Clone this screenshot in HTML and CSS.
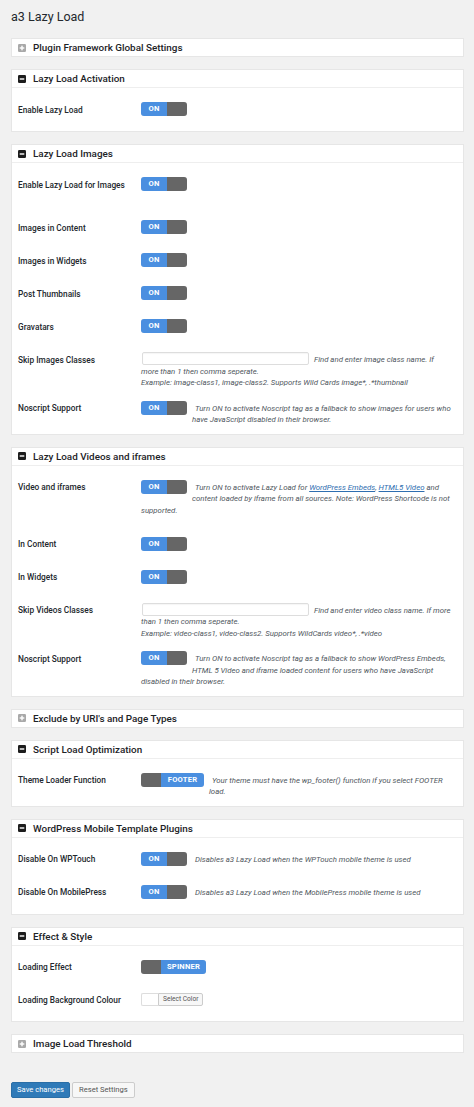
FILE: index.html
```html
<!DOCTYPE html>
<html>
<head>
<meta charset="utf-8">
<link rel="stylesheet" href="styles.css">
</head>
<body>
<div class="wrap">
  <h1 class="title">a3 Lazy Load</h1>

  <div class="box">
    <div class="hd closed"><svg class="ico" width="8" height="8" viewBox="0 0 8 8"><rect width="8" height="8" rx="1.2" fill="#a9a9a9"/><rect x="1.7" y="3.3" width="4.6" height="1.4" fill="#fff"/><rect x="3.3" y="1.7" width="1.4" height="4.6" fill="#fff"/></svg><span>Plugin Framework Global Settings</span></div>
  </div>

  <div class="box">
    <div class="hd"><svg class="ico" width="8" height="8" viewBox="0 0 8 8"><rect width="8" height="8" rx="1.2" fill="#1d1d1d"/><rect x="1.7" y="3.3" width="4.6" height="1.4" fill="#fff"/></svg><span>Lazy Load Activation</span></div>
    <div class="tbl">
      <div class="row"><div class="lbl">Enable Lazy Load</div><div class="fld"><span class="tg"><b class="tb">ON</b><i class="tr"></i></span></div></div>
    </div>
  </div>

  <div class="box">
    <div class="hd"><svg class="ico" width="8" height="8" viewBox="0 0 8 8"><rect width="8" height="8" rx="1.2" fill="#1d1d1d"/><rect x="1.7" y="3.3" width="4.6" height="1.4" fill="#fff"/></svg><span>Lazy Load Images</span></div>
    <div class="tbl">
      <div class="row row-tall"><div class="lbl">Enable Lazy Load for Images</div><div class="fld"><span class="tg"><b class="tb">ON</b><i class="tr"></i></span></div></div>
      <div class="row"><div class="lbl">Images in Content</div><div class="fld"><span class="tg"><b class="tb">ON</b><i class="tr"></i></span></div></div>
      <div class="row"><div class="lbl">Images in Widgets</div><div class="fld"><span class="tg"><b class="tb">ON</b><i class="tr"></i></span></div></div>
      <div class="row"><div class="lbl">Post Thumbnails</div><div class="fld"><span class="tg"><b class="tb">ON</b><i class="tr"></i></span></div></div>
      <div class="row"><div class="lbl">Gravatars</div><div class="fld"><span class="tg"><b class="tb">ON</b><i class="tr"></i></span></div></div>
      <div class="row row-skip"><div class="lbl">Skip Images Classes</div><div class="fld"><span class="inp"></span><p class="desc">Find and enter image class name. If<br>more than 1 then comma seperate.<br>Example: image-class1, image-class2. Supports Wild Cards image*, .*thumbnail</p></div></div>
      <div class="row row-desc"><div class="lbl">Noscript Support</div><div class="fld"><span class="tg fl"><b class="tb">ON</b><i class="tr"></i></span><p class="desc ind">Turn ON to activate Noscript tag as a fallback to show images for users who have JavaScript disabled in their browser.</p></div></div>
    </div>
  </div>

  <div class="box">
    <div class="hd"><svg class="ico" width="8" height="8" viewBox="0 0 8 8"><rect width="8" height="8" rx="1.2" fill="#1d1d1d"/><rect x="1.7" y="3.3" width="4.6" height="1.4" fill="#fff"/></svg><span>Lazy Load Videos and iframes</span></div>
    <div class="tbl">
      <div class="row row-video"><div class="lbl">Video and iframes</div><div class="fld"><span class="tg fl"><b class="tb">ON</b><i class="tr"></i></span><p class="desc ind">Turn ON to activate Lazy Load for <a href="#">WordPress Embeds</a>, <a href="#">HTML5 Video</a> and content loaded by iframe from all sources. Note: WordPress Shortcode is not supported.</p></div></div>
      <div class="row"><div class="lbl">In Content</div><div class="fld"><span class="tg"><b class="tb">ON</b><i class="tr"></i></span></div></div>
      <div class="row"><div class="lbl">In Widgets</div><div class="fld"><span class="tg"><b class="tb">ON</b><i class="tr"></i></span></div></div>
      <div class="row row-skip"><div class="lbl">Skip Videos Classes</div><div class="fld"><span class="inp"></span><p class="desc">Find and enter video class name. If more than 1 then comma seperate.<br>Example: video-class1, video-class2. Supports WildCards video*, .*video</p></div></div>
      <div class="row row-desc"><div class="lbl">Noscript Support</div><div class="fld"><span class="tg fl"><b class="tb">ON</b><i class="tr"></i></span><p class="desc ind">Turn ON to activate Noscript tag as a fallback to show WordPress Embeds, HTML 5 Video and iframe loaded content for users who have JavaScript disabled in their browser.</p></div></div>
    </div>
  </div>

  <div class="box">
    <div class="hd closed"><svg class="ico" width="8" height="8" viewBox="0 0 8 8"><rect width="8" height="8" rx="1.2" fill="#a9a9a9"/><rect x="1.7" y="3.3" width="4.6" height="1.4" fill="#fff"/><rect x="3.3" y="1.7" width="1.4" height="4.6" fill="#fff"/></svg><span>Exclude by URI's and Page Types</span></div>
  </div>

  <div class="box">
    <div class="hd"><svg class="ico" width="8" height="8" viewBox="0 0 8 8"><rect width="8" height="8" rx="1.2" fill="#1d1d1d"/><rect x="1.7" y="3.3" width="4.6" height="1.4" fill="#fff"/></svg><span>Script Load Optimization</span></div>
    <div class="tbl">
      <div class="row row-desc"><div class="lbl">Theme Loader Function</div><div class="fld"><span class="tg tg-wide fl"><i class="tr"></i><b class="tb">FOOTER</b></span><p class="desc ind">Your theme must have the wp_footer() function if you select FOOTER load.</p></div></div>
    </div>
  </div>

  <div class="box">
    <div class="hd"><svg class="ico" width="8" height="8" viewBox="0 0 8 8"><rect width="8" height="8" rx="1.2" fill="#1d1d1d"/><rect x="1.7" y="3.3" width="4.6" height="1.4" fill="#fff"/></svg><span>WordPress Mobile Template Plugins</span></div>
    <div class="tbl">
      <div class="row"><div class="lbl">Disable On WPTouch</div><div class="fld"><span class="tg fl nm"><b class="tb">ON</b><i class="tr"></i></span><p class="desc ind">Disables a3 Lazy Load when the WPTouch mobile theme is used</p></div></div>
      <div class="row"><div class="lbl">Disable On MobilePress</div><div class="fld"><span class="tg fl nm"><b class="tb">ON</b><i class="tr"></i></span><p class="desc ind">Disables a3 Lazy Load when the MobilePress mobile theme is used</p></div></div>
    </div>
  </div>

  <div class="box">
    <div class="hd"><svg class="ico" width="8" height="8" viewBox="0 0 8 8"><rect width="8" height="8" rx="1.2" fill="#1d1d1d"/><rect x="1.7" y="3.3" width="4.6" height="1.4" fill="#fff"/></svg><span>Effect &amp; Style</span></div>
    <div class="tbl">
      <div class="row"><div class="lbl">Loading Effect</div><div class="fld"><span class="tg tg-wide2"><i class="tr"></i><b class="tb">SPINNER</b></span></div></div>
      <div class="row row-color"><div class="lbl">Loading Background Colour</div><div class="fld"><span class="color"><span class="swatch"></span><span class="cbtn">Select Color</span></span></div></div>
    </div>
  </div>

  <div class="box">
    <div class="hd closed"><svg class="ico" width="8" height="8" viewBox="0 0 8 8"><rect width="8" height="8" rx="1.2" fill="#a9a9a9"/><rect x="1.7" y="3.3" width="4.6" height="1.4" fill="#fff"/><rect x="3.3" y="1.7" width="1.4" height="4.6" fill="#fff"/></svg><span>Image Load Threshold</span></div>
  </div>

  <div class="actions">
    <button class="btn primary">Save changes</button>
    <button class="btn">Reset Settings</button>
  </div>
</div>
</body>
</html>
```
FILE: styles.css
```css
* { box-sizing: border-box; }
html, body { margin: 0; padding: 0; }
body {
  background: #f1f1f1;
  font-family: Roboto, "Liberation Sans", Arial, sans-serif;
  color: #23282d;
}
.wrap { padding: 0 10px 0 11px; }
.title {
  font-size: 12.5px;
  font-weight: 400;
  line-height: 18px;
  margin: 0;
  padding: 8px 0 12px 0;
  color: #23282d;
}
.box {
  background: #fff;
  border: 1px solid #e6e6e6;
  margin-bottom: 12px;
}
.hd {
  height: 18px;
  display: flex;
  align-items: center;
  padding-left: 6px;
  border-bottom: 1px solid #eeeeee;
  font-size: 9.9px;
  font-weight: 500;
  color: #1d2327;
}
.hd.closed { height: 17px; border-bottom: 0; }
.ico { display: block; margin-right: 7px; flex: none; }
.tbl { padding: 5px 0 5px 0; }
.row {
  display: flex;
  padding: 9px 8px 10px 6px;
}
.row-tall { padding-bottom: 20px; }
.row-skip { padding-bottom: 3px; }
.row-desc { padding-bottom: 3px; }
.row-video { padding-bottom: 11.5px; }
.lbl {
  width: 123px;
  flex: none;
  font-size: 8.3px;
  font-weight: 500;
  line-height: 12px;
  padding-top: 1.5px;
  color: #23282d;
}
.fld {
  flex: 1;
  min-width: 0;
  font-size: 7.8px;
  line-height: 11.5px;
}
.tg {
  display: flex;
  width: 46px;
  height: 14px;
  border-radius: 3px;
  overflow: hidden;
  box-shadow: inset 0 0 0 1px rgba(0,0,0,0.12);
}
.tg.fl { float: left; margin: 0 5px 6px 0; }
.tg.fl.nm { margin-bottom: 0; }
.tb {
  width: 26px;
  background: #4a8fe0;
  color: #fff;
  font-size: 7.6px;
  font-weight: 700;
  line-height: 14px;
  text-align: center;
  letter-spacing: 0.2px;
}
.tr { flex: 1; background: #666666; }
.tg-wide { width: 63px; }
.tg-wide .tb { width: 43px; }
.tg-wide2 { width: 65px; }
.tg-wide2 .tb { width: 45px; }
.inp {
  float: left;
  width: 167px;
  height: 13px;
  margin: 0 5px 0 1px;
  background: #fff;
  border: 1px solid #dddddd;
  border-radius: 2px;
  box-shadow: inset 0 1px 1px rgba(0,0,0,0.04);
}
.desc {
  margin: 0;
  padding-top: 2px;
  font-size: 7.8px;
  font-style: italic;
  line-height: 11.5px;
  color: #50575e;
}
.desc.ind { text-indent: 3px; }
.desc a { color: #2e6eb0; text-decoration: underline; }
.row-color { padding-bottom: 10px; }
.color { display: flex; height: 13px; }
.swatch {
  width: 17px;
  height: 13px;
  background: #fff;
  border: 1px solid #dddddd;
  border-right: 0;
  border-radius: 2px 0 0 2px;
}
.cbtn {
  height: 13px;
  padding: 0 4px;
  background: #f7f7f7;
  border: 1px solid #cccccc;
  border-radius: 0 2px 2px 0;
  font-size: 6.6px;
  line-height: 11px;
  color: #555;
}
.actions {
  display: flex;
  gap: 2px;
  margin-top: 29px;
}
.btn {
  height: 16px;
  padding: 0 6px;
  font-family: inherit;
  font-size: 7.6px;
  line-height: 14px;
  border-radius: 2px;
  border: 1px solid #cccccc;
  background: #f7f7f7;
  color: #555;
}
.btn.primary {
  width: 59px;
  padding: 0;
  background: #2f7ab8;
  border-color: #2a6ea6;
  color: #fff;
}
```
